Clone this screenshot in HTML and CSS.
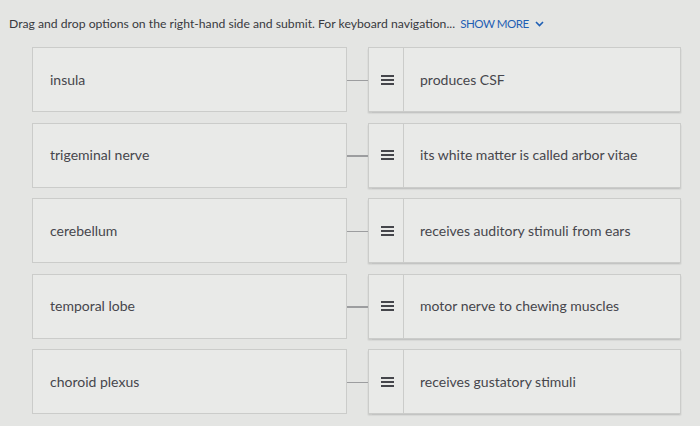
FILE: index.html
```html
<!DOCTYPE html>
<html>
<head>
<meta charset="utf-8">
<link rel="stylesheet" href="styles.css">
</head>
<body>
<div class="page">
  <div class="intro">Drag and drop options on the right-hand side and submit. For keyboard navigation... <span class="more">SHOW MORE <svg class="chev" width="9" height="6" viewBox="0 0 9 6"><path d="M1 1 L4.5 4.5 L8 1" fill="none" stroke="#1f5fb4" stroke-width="1.6"/></svg></span></div>
  <div class="rows">
    <div class="row">
      <div class="term">insula</div>
      <div class="link"></div>
      <div class="answer"><div class="handle"><span class="grip"></span></div><div class="atext">produces CSF</div></div>
    </div>
    <div class="row">
      <div class="term">trigeminal nerve</div>
      <div class="link"></div>
      <div class="answer"><div class="handle"><span class="grip"></span></div><div class="atext">its white matter is called arbor vitae</div></div>
    </div>
    <div class="row">
      <div class="term">cerebellum</div>
      <div class="link"></div>
      <div class="answer"><div class="handle"><span class="grip"></span></div><div class="atext">receives auditory stimuli from ears</div></div>
    </div>
    <div class="row">
      <div class="term">temporal lobe</div>
      <div class="link"></div>
      <div class="answer"><div class="handle"><span class="grip"></span></div><div class="atext">motor nerve to chewing muscles</div></div>
    </div>
    <div class="row">
      <div class="term">choroid plexus</div>
      <div class="link"></div>
      <div class="answer"><div class="handle"><span class="grip"></span></div><div class="atext">receives gustatory stimuli</div></div>
    </div>
  </div>
</div>
</body>
</html>
```

FILE: styles.css
```css
html, body {
  margin: 0;
  padding: 0;
  background: #e4e5e3;
}
.page {
  width: 700px;
  height: 426px;
  overflow: hidden;
  font-family: "Lato", "Open Sans", sans-serif;
  color: #46464c;
}
.intro {
  padding: 16px 0 0 9px;
  height: 31px;
  font-size: 12.2px;
  line-height: 16px;
  color: #38393e;
  box-sizing: border-box;
  white-space: nowrap;
}
.more {
  color: #1f5fb4;
  font-size: 11.6px;
  letter-spacing: -0.5px;
  margin-left: 2px;
}
.chev {
  margin-left: 4px;
  vertical-align: 1px;
}
.rows {
  margin-top: 16px;
  display: flex;
  flex-direction: column;
  gap: 10.5px;
  padding-left: 32px;
}
.row {
  display: flex;
  align-items: stretch;
  height: 65px;
}
.term {
  width: 315px;
  box-sizing: border-box;
  border: 1px solid #cbccca;
  background: #e9eae8;
  display: flex;
  align-items: center;
  padding-left: 17px;
  padding-bottom: 1px;
  font-size: 14px;
}
.link {
  width: 21px;
  position: relative;
}
.link::before {
  content: "";
  position: absolute;
  left: 0;
  right: 0;
  top: 50%;
  height: 1.5px;
  background: #9c9d9f;
}
.answer {
  width: 313px;
  box-sizing: border-box;
  border: 1px solid #cbccca;
  background: #e9eae8;
  box-shadow: 0 1.5px 1.5px rgba(0,0,0,0.14);
  display: flex;
  font-size: 14px;
}
.handle {
  width: 34px;
  border-right: 1px solid #cbccca;
  display: flex;
  align-items: center;
  justify-content: center;
}
.grip {
  width: 13px;
  height: 2px;
  background: #45464b;
  box-shadow: 0 4px 0 #45464b, 0 8px 0 #45464b;
  margin-top: -8px;
  margin-left: 2px;
}
.atext {
  display: flex;
  align-items: center;
  padding-left: 16px;
  padding-bottom: 1px;
}
```
